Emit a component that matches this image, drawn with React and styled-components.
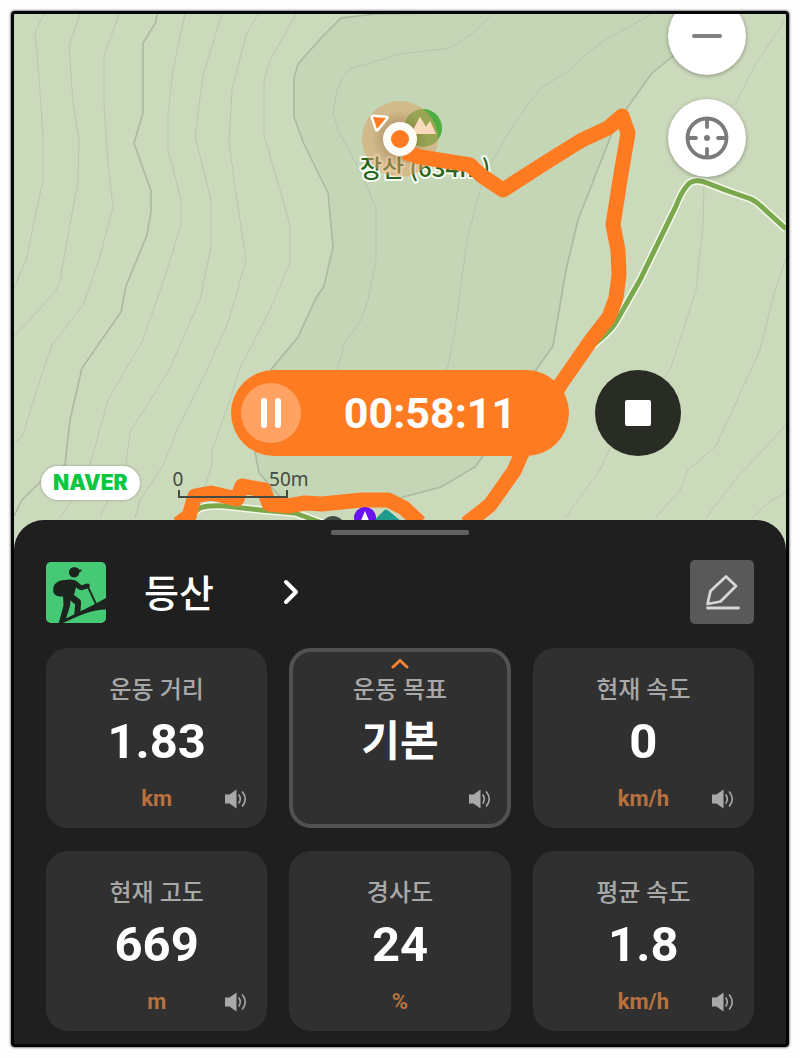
import { useState } from "react";
import styled, { createGlobalStyle } from "styled-components";

const GlobalStyle = createGlobalStyle`
  * {
    box-sizing: border-box;
  }
  body {
    margin: 0;
    background: #fefefe;
    font-family: Roboto, "Noto Sans CJK KR", sans-serif;
  }
  button {
    padding: 0;
    border: 0;
    background: none;
    color: inherit;
    font: inherit;
    cursor: pointer;
  }
`;

// 운동 정보 카드
const stats = [
  { id: "distance", label: "운동 거리", value: "1.83", unit: "km", sound: true },
  { id: "goal", label: "운동 목표", value: "기본", unit: "", sound: true, active: true },
  { id: "speed", label: "현재 속도", value: "0", unit: "km/h", sound: true },
  { id: "altitude", label: "현재 고도", value: "669", unit: "m", sound: true },
  { id: "slope", label: "경사도", value: "24", unit: "%", sound: false },
  { id: "average", label: "평균 속도", value: "1.8", unit: "km/h", sound: true },
];

// 등고선
const contours = [
  "44,14 35,32 39,77 43,136 43,180 26,260 14,288",
  "80,14 69,46 73,103 79,140 78,180 60,280 56,290 30,320 14,336",
  "119,14 104,56 104,105 108,165 113,207 99,260 83,305 52,345 44,368 22,437 14,443",
  "185,14 173,70 168,113 168,150 181,200 181,225 167,270 143,340 108,400 90,465 72,500 60,518",
  "222,14 203,75 195,137 211,200 211,247 200,300 168,372 130,432 126,465 100,516",
  "258,14 246,35 232,90 229,143 237,200 246,260 229,320 207,370 177,430 163,466 140,500 135,518",
  "296,14 269,62 264,82 264,135 280,190 290,225 290,263 270,310 240,368 230,400 212,450 212,465 204,490",
  "492,14 472,34 450,48 400,54 350,69 343,77 337,90 333,112 338,130 362,175 376,208 376,260 368,300 360,322 345,342 337,370",
  "652,14 605,40 585,55 567,72 542,87 528,104 507,135 490,165 480,190 467,240 455,330 447,370",
  "785,20 755,65 735,105",
  "704,185 703,225 696,290 670,370 610,448 600,470 565,518",
  "786,258 775,290 760,350 716,446 688,470 680,490 655,518",
  "786,425 735,480 706,518",
  "786,492 768,503 752,518",
];

const boldContour =
  "157,14 156,22 143,43 143,113 134,143 151,191 151,212 147,235 126,286 121,312 82,368 70,420 65,465 40,482 22,500 14,516";

const summitArea =
  "375,14 341,18 321,38 298,64 294,78 294,117 303,142 328,193 333,247 324,286 316,298 298,337 273,367 250,400 255,452 259,473 280,497 340,508 400,498 441,487 475,467 483,456 510,410 538,367 553,346 566,270 578,220 612,133 627,108 652,73 672,57 722,10";

const trail =
  "M786 229 762 207Q757 202 751 199L728 191 707 183Q692 177 686 187 681 193 676 206L640 280 616 322Q611 331 592 346M188 517 200 508Q208 505 225 506L260 510 295 513 322 523";

const TrackMap = () => (
  <MapDrawing viewBox="14 14 772 536" preserveAspectRatio="xMidYMin slice" aria-hidden="true">
    <defs>
      <radialGradient id="halo">
        <stop offset="35%" stopColor="#a87848" stopOpacity="0.65" />
        <stop offset="75%" stopColor="#dc9f63" stopOpacity="0.52" />
        <stop offset="100%" stopColor="#dc9f63" stopOpacity="0.52" />
      </radialGradient>
    </defs>
    <polygon points={summitArea} fill="#c4d6b5" stroke="#abb99f" strokeWidth="1.6" />
    <g fill="none" stroke="#b7c4aa" strokeWidth="0.9">
      {contours.map((points) => (
        <polyline key={points} points={points} />
      ))}
    </g>
    <polyline points={boldContour} fill="none" stroke="#abb99f" strokeWidth="1.6" />

    {/* 등산로 */}
    <g fill="none" strokeLinejoin="round">
      <path d={trail} stroke="#f3f8ea" strokeWidth="8" />
      <path d={trail} stroke="#7aa84c" strokeWidth="5" />
    </g>

    {/* 정상 표시 */}
    <circle cx="423" cy="128" r="19" fill="#4fae42" />
    <path d="M411 134 420 117 426 127 430 121 436 134Z" fill="#fff1e6" />
    <MapLabel x="360" y="177">
      장산 (634m)
    </MapLabel>
    <circle cx="400" cy="139" r="38" fill="url(#halo)" />
    <path d="M411 134 420 117 426 127 430 121 436 134Z" fill="#fbd9bd" />

    {/* 이동 경로 */}
    <g fill="none" stroke="#ff7b21" strokeWidth="15" strokeLinejoin="round">
      <path d="M404 152 420 157 470 165 482 176 503 190 545 163 582 140 608 128 622 116 628 133 620 180 613 225 618 250 619 275 616 298 609 317 592 339 560 385 521 455 514 471 490 505 466 524" />
      <path d="M178 524 189 516 195 496 211 493 237 499 242 486 264 490 269 504 288 506 305 503 322 504 362 500 388 500 404 508 420 523" />
    </g>
    <circle cx="400" cy="139" r="17" fill="#fffdf8" />
    <circle cx="400" cy="139" r="9" fill="#ff7b21" />
    <path
      d="M373 117 386 118 377 129Z"
      fill="#ff7b21"
      stroke="#fff"
      strokeWidth="5"
      strokeLinejoin="round"
      paintOrder="stroke"
    />

    {/* 지도 아래쪽 장소 */}
    <circle cx="333" cy="528" r="12" fill="#444b46" />
    <path d="M376 522 386 512 398 522Z" fill="#1f9c8d" stroke="#1f9c8d" strokeWidth="5" strokeLinejoin="round" />
    <circle cx="365" cy="518" r="11" fill="#6b12f5" />
    <path d="M365 511 370 523H360Z" fill="#fff" />
  </MapDrawing>
);

const HikerIcon = () => (
  <svg width="60" height="61" viewBox="0 0 60 61" aria-hidden="true">
    <rect width="60" height="61" rx="5" fill="#46c975" />
    <g fill="#1d241f">
      <path d="M23 10.500C23 7 25.500 5.300 28.500 5.300 31 5.300 32.500 6.200 33.200 7.700L35.500 7.600V9.300L33.300 10.200C33.300 13.300 31 15.400 28.300 15.400 25.400 15.400 23 13.500 23 10.500Z" />
      <path d="M20 18C12 17.500 7 22 7.200 28 7.300 33 11 35 18 34.500Z" />
      <path d="M18 18.500C23 16.800 29 17.600 31 19.500L35.500 23.200 41 21.500C43 21 44.500 23 43.500 25L41.500 26.500 35.500 28.200C33.500 28.200 31 26 30 25.200L28 33 34 37.500C35 38.500 35.200 40 35 42L34.200 52 28 54.500 29.200 42.500 24.500 38.500 24 44 19 60H13L17.500 43.500 17 33Z" />
      <path d="M12 61C25 53 43 46 60 36V47.500C45 47.500 32 54 17 61Z" />
    </g>
    <path d="M41.500 24 50 42" stroke="#1d241f" strokeWidth="1.800" />
  </svg>
);

const ChevronIcon = () => (
  <svg width="18" height="28" viewBox="0 0 18 28" aria-hidden="true">
    <path d="M4 4 14 14 4 24" fill="none" stroke="#fff" strokeWidth="4" strokeLinecap="round" strokeLinejoin="round" />
  </svg>
);

const EditIcon = () => (
  <svg width="64" height="64" viewBox="0 0 64 64" aria-hidden="true">
    <g fill="none" stroke="#d6d6d6" strokeWidth="2.800" strokeLinejoin="round">
      <path d="M36 16.500 46 26 30.500 41.500 17.500 44 20.500 31Z" />
      <path d="M17.500 48H48.500" strokeLinecap="round" />
    </g>
  </svg>
);

const SpeakerIcon = () => (
  <svg width="22" height="20" viewBox="0 0 22 20" aria-hidden="true">
    <path d="M0 5.500H4.500L11.500 .500V19.500L4.500 14.500H0Z" fill="#a9a9a9" />
    <path
      d="M14 6Q16.500 10 14 14M17.500 3Q23 10 17.500 17"
      fill="none"
      stroke="#a9a9a9"
      strokeWidth="1.600"
      strokeLinecap="round"
    />
  </svg>
);

const LocateIcon = () => (
  <svg width="44" height="44" viewBox="0 0 44 44" aria-hidden="true">
    <g fill="none" stroke="#7b7b7b" strokeWidth="3.800" strokeLinecap="round">
      <circle cx="22" cy="22" r="19.500" />
      <path d="M22 4V11M22 33V40M4 22H11M33 22H40" />
    </g>
    <circle cx="22" cy="22" r="3" fill="#7b7b7b" />
  </svg>
);

const StatCard = ({ stat }) => {
  const [sound, setSound] = useState(stat.sound);

  return (
    <Card $active={stat.active}>
      {stat.active && (
        <GoalMark width="18" height="11" viewBox="0 0 18 11" aria-hidden="true">
          <path d="M2 9 9 2.500 16 9" fill="none" stroke="#f58233" strokeWidth="3" strokeLinecap="round" />
        </GoalMark>
      )}
      <CardLabel>{stat.label}</CardLabel>
      <CardValue $korean={stat.active}>{stat.value}</CardValue>
      <CardFooter>
        <Unit>{stat.unit}</Unit>
        {stat.sound && (
          <SoundButton
            type="button"
            aria-label={stat.label + " 음성 안내"}
            aria-pressed={sound}
            onClick={() => setSound(!sound)}
          >
            <SpeakerIcon />
          </SoundButton>
        )}
      </CardFooter>
    </Card>
  );
};

const App = () => {
  return (
    <>
      <GlobalStyle />
      <Frame>
        <MapArea>
          <TrackMap />
          <MapButtons>
            <RoundButton type="button" aria-label="축소">
              <Minus />
            </RoundButton>
            <RoundButton type="button" aria-label="현재 위치">
              <LocateIcon />
            </RoundButton>
          </MapButtons>
          <TimerRow>
            <Timer>
              <PauseButton type="button" aria-label="일시정지">
                <PauseBar />
                <PauseBar />
              </PauseButton>
              <Time>00:58:11</Time>
            </Timer>
            <StopButton type="button" aria-label="정지">
              <StopMark />
            </StopButton>
          </TimerRow>
          <MapFooter>
            <NaverLink href="#naver">NAVER</NaverLink>
            <Scale>
              <ScaleText>
                <span>0</span>
                <span>50m</span>
              </ScaleText>
              <ScaleBar />
            </Scale>
          </MapFooter>
        </MapArea>
        <Sheet>
          <Handle />
          <SheetHeader>
            <HikerIcon />
            <SportButton type="button">
              <SportName>등산</SportName>
              <ChevronIcon />
            </SportButton>
            <EditButton type="button" aria-label="편집">
              <EditIcon />
            </EditButton>
          </SheetHeader>
          <CardGrid>
            {stats.map((stat) => {
              return <StatCard key={stat.id} stat={stat} />;
            })}
          </CardGrid>
        </Sheet>
      </Frame>
    </>
  );
};

export default App;

const Frame = styled.main`
  margin: 11px;
  border: 3px solid #050607;
  border-radius: 4px;
  background: #1f1f1f;
  box-shadow: 0 0 2px 1px rgba(0, 0, 0, 0.45);
  overflow: hidden;
`;

const MapArea = styled.section`
  position: relative;
  display: flex;
  flex-direction: column;
  padding-bottom: 50px;
  background: #ccdabc;
  overflow: hidden;
`;

const MapDrawing = styled.svg`
  position: absolute;
  inset: 0;
  width: 100%;
  height: 100%;
`;

const MapLabel = styled.text`
  font-family: "Noto Sans CJK KR", sans-serif;
  font-size: 24px;
  font-weight: 500;
  fill: #276420;
  stroke: #f8fbf2;
  stroke-width: 4px;
  stroke-linejoin: round;
  paint-order: stroke;
`;

const MapButtons = styled.div`
  position: relative;
  display: flex;
  flex-direction: column;
  align-items: flex-end;
  gap: 24px;
  margin-top: -17px;
  padding-right: 40px;
`;

const RoundButton = styled.button`
  display: flex;
  align-items: center;
  justify-content: center;
  width: 78px;
  height: 78px;
  border-radius: 50%;
  background: #fff;
  box-shadow: 0 1px 4px rgba(0, 0, 0, 0.35);
`;

const Minus = styled.span`
  width: 30px;
  height: 4px;
  border-radius: 2px;
  background: #808080;
`;

const TimerRow = styled.div`
  position: relative;
  display: grid;
  grid-template-columns: 1fr auto 1fr;
  column-gap: 26px;
  margin-top: 193px;
`;

const Timer = styled.div`
  grid-column: 2;
  display: flex;
  align-items: center;
  width: 338px;
  height: 86px;
  padding: 0 10px;
  border-radius: 43px;
  background: #ff7b21;
`;

const PauseButton = styled.button`
  display: flex;
  align-items: center;
  justify-content: center;
  gap: 8px;
  width: 60px;
  height: 60px;
  border-radius: 50%;
  background: #ffa264;
`;

const PauseBar = styled.span`
  width: 6px;
  height: 30px;
  border-radius: 3px;
  background: #fff;
`;

const Time = styled.time`
  flex: 1;
  color: #fff;
  font-size: 43px;
  font-weight: 700;
  line-height: 60px;
  text-align: center;
`;

const StopButton = styled.button`
  display: flex;
  align-items: center;
  justify-content: center;
  width: 86px;
  height: 86px;
  border-radius: 50%;
  background: #292c25;
`;

const StopMark = styled.span`
  width: 26px;
  height: 26px;
  border-radius: 2px;
  background: #fff;
`;

const MapFooter = styled.div`
  position: relative;
  display: flex;
  align-items: center;
  gap: 33px;
  margin-top: 10px;
  padding-left: 27px;
`;

const NaverLink = styled.a`
  padding: 0 12px;
  border-radius: 17px;
  background: #fff;
  box-shadow: 0 0 3px rgba(0, 0, 0, 0.3);
  color: #09c83f;
  font-family: Inter, sans-serif;
  font-size: 21px;
  font-weight: 900;
  line-height: 34px;
  text-decoration: none;
`;

const Scale = styled.div`
  width: 136px;
`;

const ScaleText = styled.div`
  display: flex;
  justify-content: space-between;
  color: #454a42;
  font-family: "Noto Sans", sans-serif;
  font-size: 19px;
  line-height: 22px;
`;

const ScaleBar = styled.div`
  width: 110px;
  height: 8px;
  margin-left: 5px;
  border: 2px solid #454a42;
  border-top: 0;
`;

const Sheet = styled.section`
  position: relative;
  display: flex;
  flex-direction: column;
  margin-top: -30px;
  padding: 10px 32px 13px;
  border-radius: 30px 30px 0 0;
  background: #1f1f1f;
`;

const Handle = styled.div`
  align-self: center;
  width: 138px;
  height: 5px;
  border-radius: 2px;
  background: #626262;
`;

const SheetHeader = styled.header`
  display: flex;
  align-items: center;
  margin: 25px 0 24px;
`;

const SportButton = styled.button`
  display: flex;
  align-items: center;
  gap: 68px;
  margin-left: 38px;
  color: #fff;
`;

const SportName = styled.span`
  padding-top: 4px;
  font-size: 38px;
  font-weight: 500;
  line-height: 48px;
`;

const EditButton = styled.button`
  display: flex;
  margin-left: auto;
  border-radius: 5px;
  background: #595959;
`;

const CardGrid = styled.div`
  display: grid;
  grid-template-columns: repeat(3, 1fr);
  gap: 23px 22px;
`;

const Card = styled.article`
  position: relative;
  display: flex;
  flex-direction: column;
  align-items: center;
  padding: 22px 16px 13px;
  border: 4px solid ${(props) => (props.$active ? "#525252" : "#303030")};
  border-radius: 22px;
  background: #303030;
`;

const GoalMark = styled.svg`
  position: absolute;
  top: 6px;
`;

const CardLabel = styled.h2`
  margin: 0;
  color: #a8a8a8;
  font-size: 24px;
  font-weight: 500;
  line-height: 32px;
`;

const CardValue = styled.strong`
  margin-top: 6px;
  color: #fff;
  font-size: ${(props) => (props.$korean ? "42px" : "49px")};
  font-weight: 700;
  line-height: 60px;
`;

const CardFooter = styled.div`
  display: grid;
  grid-template-columns: 1fr auto 1fr;
  align-items: center;
  align-self: stretch;
  height: 24px;
  margin-top: 15px;
`;

const Unit = styled.span`
  grid-column: 2;
  color: #b9713f;
  font-size: 22px;
  font-weight: 700;
  line-height: 24px;
`;

const SoundButton = styled.button`
  display: flex;
  grid-column: 3;
  justify-self: end;
`;
